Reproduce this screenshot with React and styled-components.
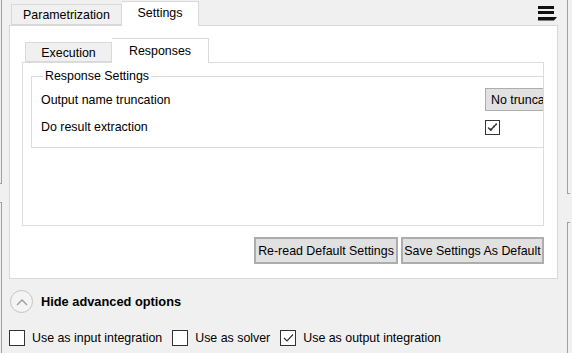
import React from "react";
import styled, { createGlobalStyle } from "styled-components";

const GlobalStyle = createGlobalStyle`
  html, body {
    margin: 0;
    padding: 0;
    background: #f0f0f0;
  }
  body {
    font-family: "Liberation Sans", Arial, sans-serif;
    font-size: 12.4px;
    color: #000;
  }
`;

const Page = styled.div`
  display: flex;
  width: 572px;
  height: 353px;
  overflow: hidden;
  background: #f0f0f0;
`;

const Edge = styled.div`
  display: flex;
  flex-direction: column;
  width: ${(p) => p.$width}px;
  flex-shrink: 0;
  padding-left: ${(p) => (p.$side === "right" ? 9 : 0)}px;
  box-sizing: border-box;
`;

const EdgeBox = styled.div`
  box-sizing: border-box;
  width: 3px;
  ${(p) => (p.$side === "right" ? "border-left" : "border-right")}: 1px solid #a0a0a0;
  ${(p) => (p.$top ? "border-bottom" : "border-top")}: 1px solid #a0a0a0;
  height: ${(p) => (p.$height ? `${p.$height}px` : "auto")};
  flex: ${(p) => (p.$height ? "none" : 1)};
  margin-top: ${(p) => p.$gap || 0}px;
  margin-left: ${(p) => (p.$side === "right" ? 0 : -1)}px;
`;

const Main = styled.div`
  width: 549px;
  flex-shrink: 0;
  display: flex;
  flex-direction: column;
`;

const TabBar = styled.div`
  display: flex;
  align-items: flex-end;
  height: ${(p) => p.$height}px;
  padding-left: ${(p) => p.$indent}px;
  position: relative;
  z-index: 1;
`;

const Tab = styled.div`
  box-sizing: border-box;
  width: ${(p) => p.$width}px;
  height: ${(p) => p.$height}px;
  display: flex;
  align-items: center;
  justify-content: center;
  border: 1px solid #d9d9d9;
  border-bottom: ${(p) => (p.$active ? "none" : "1px solid #d9d9d9")};
  border-left: ${(p) => (p.$joined ? "none" : "1px solid #d9d9d9")};
  background: ${(p) => (p.$active ? "#ffffff" : "#f0f0f0")};
  margin-bottom: ${(p) => (p.$active ? -1 : 0)}px;
  padding-bottom: ${(p) => p.$lift || 0}px;
  padding-top: ${(p) => p.$drop || 0}px;
  white-space: nowrap;
`;

const MenuButton = styled.div`
  margin-left: auto;
  align-self: flex-start;
  margin-top: 6px;
  margin-right: 1px;
  width: 19px;
  height: 15px;
`;

const Pane = styled.div`
  box-sizing: border-box;
  height: ${(p) => p.$height}px;
  background: #ffffff;
  border: 1px solid ${(p) => p.$border};
  display: flex;
  flex-direction: column;
  padding: ${(p) => p.$pad};
  overflow: hidden;
`;

const Group = styled.fieldset`
  margin: 5px 0 0 8px;
  padding: 4px 0 4px 9px;
  width: 560px;
  box-sizing: border-box;
  border: 1px solid #dcdcdc;
  flex-shrink: 0;

  legend {
    margin-left: 2px;
    padding: 0 2px;
    line-height: 16px;
  }
`;

const FieldRow = styled.div`
  display: grid;
  grid-template-columns: 444px auto;
  align-items: center;
  height: ${(p) => p.$height}px;
`;

const Combo = styled.div`
  box-sizing: border-box;
  width: 110px;
  height: 23px;
  display: flex;
  align-items: center;
  padding-left: 5px;
  background: #e1e1e1;
  border: 1px solid #adadad;
  white-space: nowrap;
`;

const Box = styled.span`
  box-sizing: border-box;
  width: ${(p) => p.$size}px;
  height: ${(p) => p.$size}px;
  border: 1px solid #333333;
  background: #ffffff;
  display: inline-flex;
  align-items: center;
  justify-content: center;
  flex-shrink: 0;
`;

const ButtonRow = styled.div`
  display: flex;
  justify-content: flex-end;
  gap: 3px;
  margin-top: 11px;
`;

const Button = styled.div`
  box-sizing: border-box;
  width: ${(p) => p.$width}px;
  height: 27px;
  display: flex;
  align-items: center;
  justify-content: center;
  background: #e1e1e1;
  border: 2px solid #adadad;
  white-space: nowrap;
`;

const Toggle = styled.div`
  display: flex;
  align-items: center;
  gap: 8px;
  margin: 11px 0 0 1px;
  font-weight: bold;
  font-size: 12.8px;
`;

const Circle = styled.span`
  box-sizing: border-box;
  width: 23px;
  height: 23px;
  border-radius: 50%;
  border: 1px solid #c4c4c4;
  background: #f4f4f4;
  display: inline-flex;
  align-items: center;
  justify-content: center;
`;

const Options = styled.div`
  display: flex;
  align-items: center;
  margin-top: 17px;
`;

const Option = styled.label`
  display: flex;
  align-items: center;
  gap: 7px;
  margin-right: 10px;
  white-space: nowrap;
`;

const Tick = ({ dotted }) => (
  <svg width="11" height="10" viewBox="0 0 11 10">
    {dotted ? (
      <g fill="#3a3a3a">
        <path d="M1 5.5 L3.5 8 L9.5 2" stroke="#3a3a3a" strokeWidth="1.3" fill="none" />
        <circle cx="4" cy="7.5" r="1.2" />
        <circle cx="7" cy="4.5" r="1.1" />
        <circle cx="9.3" cy="2.2" r="0.9" />
      </g>
    ) : (
      <path d="M1 5 L4 8 L10 1.5" stroke="#333" strokeWidth="1.2" fill="none" />
    )}
  </svg>
);

export default function App() {
  return (
    <>
      <GlobalStyle />
      <Page>
        <Edge $width={9}>
          <EdgeBox $top $height={184} />
          <EdgeBox $gap={18} />
        </Edge>

        <Main>
          <TabBar $height={25} $indent={2}>
            <Tab $width={111} $height={21} $drop={1}>Parametrization</Tab>
            <Tab $width={77} $height={25} $active $joined $lift={2}>
              Settings
            </Tab>
            <MenuButton>
              <svg width="19" height="15" viewBox="0 0 19 15">
                <rect x="0" y="0" width="16" height="3" fill="#111" />
                <rect x="0" y="5" width="16" height="3" fill="#111" />
                <path d="M0 11 H19 L16 14.5 H0 Z" fill="#111" />
              </svg>
            </MenuButton>
          </TabBar>

          <Pane $height={254} $border="#d9d9d9" $pad="12px 13px 14px 12px">
            <TabBar $height={24} $indent={3}>
              <Tab $width={87} $height={20} $drop={2}>Execution</Tab>
              <Tab $width={97} $height={25} $active $joined $lift={1}>
                Responses
              </Tab>
            </TabBar>
            <Pane $height={164} $border="#dcdcdc" $pad="0">
              <Group>
                <legend>Response Settings</legend>
                <FieldRow $height={23}>
                  <span>Output name truncation</span>
                  <Combo>No truncation</Combo>
                </FieldRow>
                <FieldRow $height={32}>
                  <span>Do result extraction</span>
                  <Box $size={15}>
                    <Tick dotted />
                  </Box>
                </FieldRow>
              </Group>
            </Pane>
            <ButtonRow>
              <Button $width={144}>Re-read Default Settings</Button>
              <Button $width={143}>Save Settings As Default</Button>
            </ButtonRow>
          </Pane>

          <Toggle>
            <Circle>
              <svg width="12" height="8" viewBox="0 0 12 8">
                <path d="M1 7 L6 2 L11 7" stroke="#9a9a9a" strokeWidth="1.3" fill="none" />
              </svg>
            </Circle>
            Hide advanced options
          </Toggle>

          <Options>
            <Option>
              <Box $size={16} />
              Use as input integration
            </Option>
            <Option>
              <Box $size={16} />
              Use as solver
            </Option>
            <Option>
              <Box $size={16}>
                <Tick />
              </Box>
              Use as output integration
            </Option>
          </Options>
        </Main>

        <Edge $width={14} $side="right">
          <EdgeBox $side="right" $top $height={194} />
          <EdgeBox $side="right" $gap={28} />
        </Edge>
      </Page>
    </>
  );
}
